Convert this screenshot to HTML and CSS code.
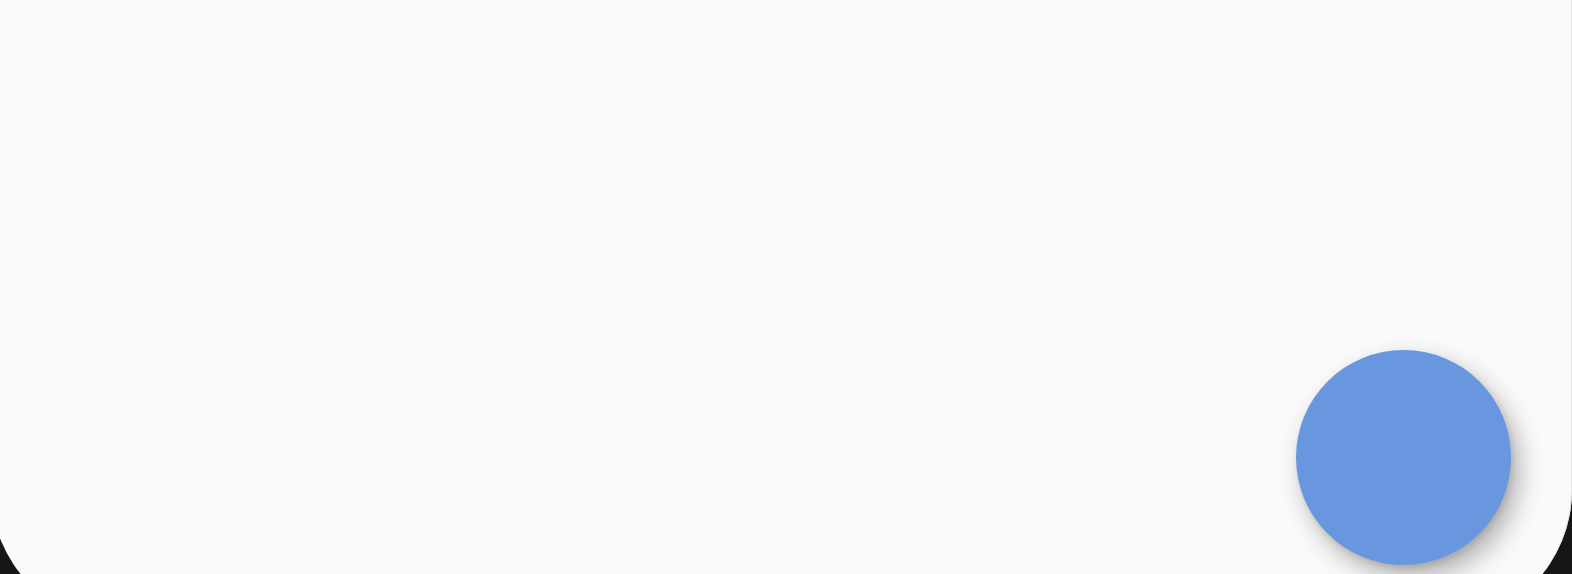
FILE: index.html
```html
<!DOCTYPE html>
<html lang="en">
<head>
<meta charset="utf-8">
<title>Screen</title>
<link rel="stylesheet" href="styles.css">
</head>
<body>
<main class="screen">
  <button class="fab" type="button" aria-label="Action"></button>
</main>
</body>
</html>
```
FILE: styles.css
```css
html {
  background: #161616;
}
body {
  margin: 0;
  height: 574px;
  overflow: hidden;
  background: #161616;
  font-family: "Roboto", "Liberation Sans", sans-serif;
}
.screen {
  position: relative;
  margin-left: -9px;
  width: 1581px;
  height: 624px;
  background: #fafafa;
  border-radius: 0 0 134px 134px;
  box-shadow: inset -1px 0 0 #e4e4e4;
}
.fab {
  position: absolute;
  top: 350px;
  left: 1305px;
  width: 215px;
  height: 215px;
  border: none;
  padding: 0;
  border-radius: 50%;
  background: #6897df;
  box-shadow: 8px 12px 26px rgba(0, 0, 0, 0.3), 2px 3px 6px rgba(0, 0, 0, 0.1);
  filter: blur(0.5px);
}
```
